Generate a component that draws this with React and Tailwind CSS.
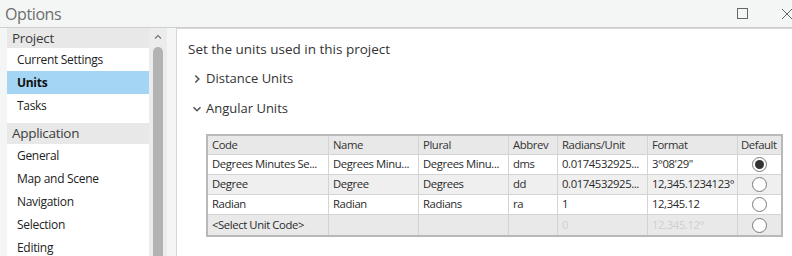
import React from "react";

const font = "font-['Open_Sans',sans-serif]";

function Chevron({ down }) {
  return down ? (
    <svg width="10" height="10" viewBox="0 0 10 10" className="shrink-0">
      <path d="M1.5 3.2 L5 6.7 L8.5 3.2" fill="none" stroke="#555" strokeWidth="1.6" />
    </svg>
  ) : (
    <svg width="10" height="10" viewBox="0 0 10 10" className="shrink-0">
      <path d="M3.3 1.5 L6.8 5 L3.3 8.5" fill="none" stroke="#555" strokeWidth="1.6" />
    </svg>
  );
}

function Radio({ checked }) {
  return (
    <div className="w-[15px] h-[15px] rounded-full border border-[#7a7a7a] bg-white flex items-center justify-center">
      {checked && <div className="w-[9px] h-[9px] rounded-full bg-[#333]" />}
    </div>
  );
}

const cols = [
  { k: "code", w: "w-[121px]", h: "Code" },
  { k: "name", w: "w-[90px]", h: "Name" },
  { k: "plural", w: "w-[90px]", h: "Plural" },
  { k: "abbrev", w: "w-[49px]", h: "Abbrev" },
  { k: "rad", w: "w-[90px]", h: "Radians/Unit" },
  { k: "fmt", w: "w-[90px]", h: "Format" },
];

const rows = [
  { bg: "bg-white", code: "Degrees Minutes Se...", name: "Degrees Minu...", plural: "Degrees Minu...", abbrev: "dms", rad: "0.0174532925...", fmt: "3°08'29\"", checked: true },
  { bg: "bg-[#efefef]", code: "Degree", name: "Degree", plural: "Degrees", abbrev: "dd", rad: "0.0174532925...", fmt: "12,345.1234123°" },
  { bg: "bg-white", code: "Radian", name: "Radian", plural: "Radians", abbrev: "ra", rad: "1", fmt: "12,345.12" },
  { bg: "bg-[#e9e9e9]", code: "<Select Unit Code>", name: "", plural: "", abbrev: "", rad: "0", fmt: "12,345.12°", placeholder: true },
];

function NavItem({ children, selected }) {
  return (
    <div
      className={`h-[23px] shrink-0 flex items-center pl-[10px] text-[12px] tracking-[-0.3px] ${
        selected ? "bg-[#a5d5f4] font-bold text-[#111]" : "bg-white text-[#222]"
      }`}
    >
      {children}
    </div>
  );
}

function NavHeader({ children, h }) {
  return (
    <div className={`${h} shrink-0 flex items-center pl-[5px] bg-[#e8e8e8] text-[13.5px] tracking-[-0.3px] text-[#3c3c3c]`}>
      {children}
    </div>
  );
}

export default function App() {
  return (
    <div className={`w-[792px] h-[256px] overflow-hidden bg-[#f4f6f5] flex flex-col ${font}`}>
      {/* Title bar */}
      <div className="h-[28px] shrink-0 flex items-center border-b border-[#cdcdcd]">
        <div className="pl-[5px] text-[16px] tracking-[-0.4px] text-[#6e6e6e] leading-none">Options</div>
        <div className="ml-auto flex items-center">
          <div className="w-[11px] h-[11px] border border-[#666] mr-[33px]" />
          <svg width="12" height="12" viewBox="0 0 12 12" className="mr-[-1px]">
            <path d="M1 1 L11 11 M11 1 L1 11" stroke="#666" strokeWidth="1" />
          </svg>
        </div>
      </div>

      <div className="flex flex-1 min-h-0">
        {/* Left nav */}
        <div className="ml-[7px] w-[160px] flex shrink-0 overflow-hidden">
          <div className="w-[142px] bg-white flex flex-col">
            <NavHeader h="h-[20px]">Project</NavHeader>
            <NavItem>Current Settings</NavItem>
            <NavItem selected>Units</NavItem>
            <NavItem>Tasks</NavItem>
            <div className="h-[6px] shrink-0 bg-white" />
            <NavHeader h="h-[21px]">Application</NavHeader>
            <NavItem>General</NavItem>
            <NavItem>Map and Scene</NavItem>
            <NavItem>Navigation</NavItem>
            <NavItem>Selection</NavItem>
            <NavItem>Editing</NavItem>
          </div>
          <div className="w-[18px] bg-[#ececec] flex flex-col items-center">
            <svg width="10" height="8" viewBox="0 0 10 8" className="mt-[5px] shrink-0">
              <path d="M2 5.5 L5 2.5 L8 5.5" fill="none" stroke="#777" strokeWidth="1.2" />
            </svg>
            <div className="mt-[6px] w-[10px] flex-1 bg-[#b3b3b3] rounded-t-[5px]" />
          </div>
        </div>

        {/* Main */}
        <div className="ml-[9px] flex-1 bg-white border-l border-t border-[#d6d6d6] pl-[11px] pt-[10px]">
          <div className="text-[13.5px] text-[#333] leading-[20px]">Set the units used in this project</div>
          <div className="mt-[10px] flex items-center gap-[4px] pl-[4px] text-[13px] text-[#333] h-[20px]">
            <Chevron />
            <span>Distance Units</span>
          </div>
          <div className="mt-[10px] flex items-center gap-[4px] pl-[4px] text-[13px] text-[#333] h-[20px]">
            <Chevron down />
            <span>Angular Units</span>
          </div>

          {/* Table */}
          <div className="mt-[15px] ml-[18px] w-[577px] border-2 border-[#b9b9b9] text-[11.3px] tracking-[-0.4px] text-[#2a2a2a]">
            <div className="flex h-[19px] bg-[#e8e8e8] border-b border-[#d4d4d4]">
              {cols.map((c) => (
                <div key={c.k} className={`${c.w} shrink-0 border-r border-[#d4d4d4] flex items-center pl-[4px] text-[#333] whitespace-nowrap overflow-hidden`}>
                  {c.h}
                </div>
              ))}
              <div className="flex-1 flex items-center pl-[3px] text-[#333] whitespace-nowrap overflow-hidden">Default</div>
            </div>
            {rows.map((r, i) => (
              <div key={i} className={`flex h-[20px] ${r.bg} ${i < rows.length - 1 ? "border-b border-[#d4d4d4]" : ""}`}>
                {cols.map((c) => (
                  <div
                    key={c.k}
                    className={`${c.w} shrink-0 border-r border-[#d4d4d4] flex items-center pl-[4px] whitespace-nowrap overflow-hidden ${
                      r.placeholder && (c.k === "rad" || c.k === "fmt") ? "text-[#cfcfcf]" : ""
                    }`}
                  >
                    {r[c.k]}
                  </div>
                ))}
                <div className="flex-1 flex items-center justify-center">
                  <Radio checked={r.checked} />
                </div>
              </div>
            ))}
          </div>
        </div>
      </div>
    </div>
  );
}
